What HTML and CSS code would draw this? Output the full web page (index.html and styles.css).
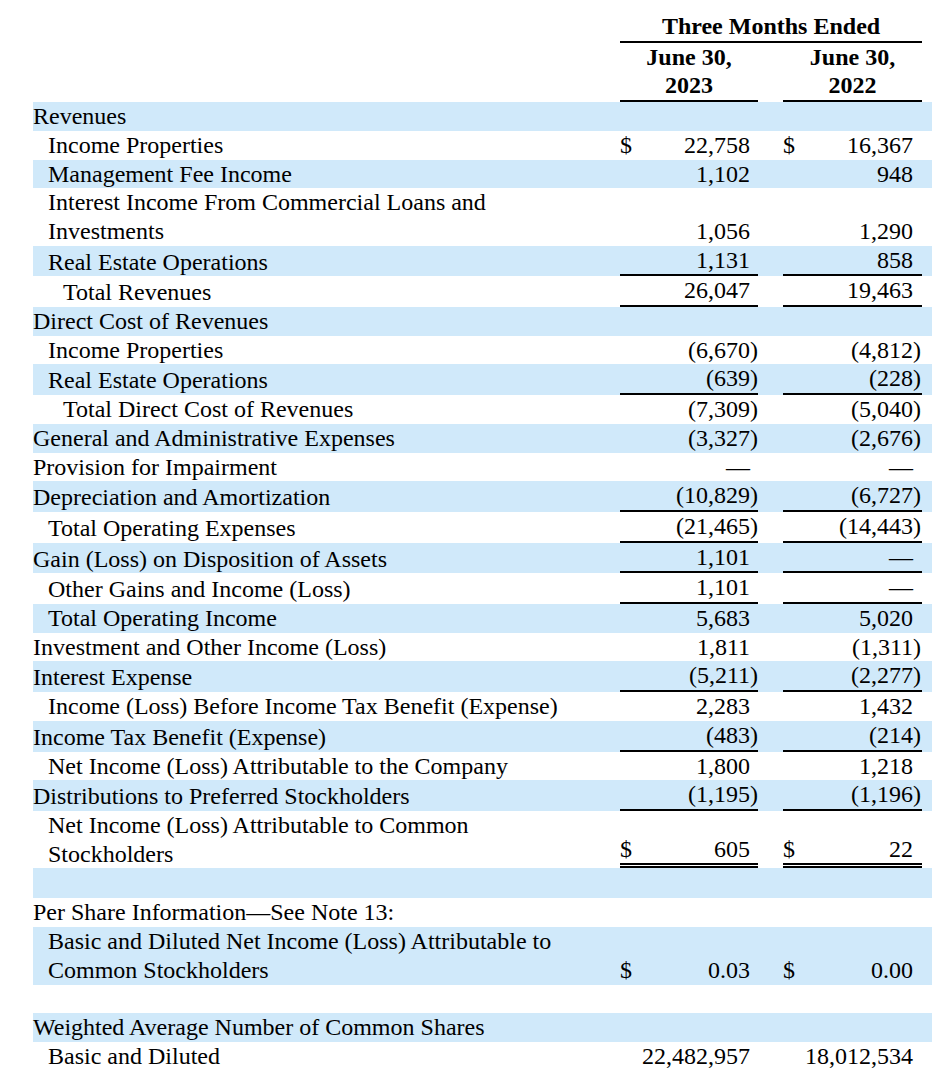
FILE: index.html
```html
<!DOCTYPE html>
<html lang="en">
<head>
<meta charset="utf-8">
<title>Consolidated Statements of Operations</title>
<link rel="stylesheet" href="styles.css">
</head>
<body>
<div class="page">
<table class="fin">
<colgroup>
<col class="c-label"><col class="c-dol"><col class="c-num"><col class="c-par">
<col class="c-gap"><col class="c-dol"><col class="c-num2"><col class="c-par2"><col class="c-trail">
</colgroup>
<thead>
<tr>
<th></th>
<th colspan="7" class="hd ul">Three Months Ended</th>
<th></th>
</tr>
<tr>
<th></th>
<th colspan="3" class="hd ul">June 30,<br>2023</th>
<th></th>
<th colspan="3" class="hd ul">June 30,<br>2022</th>
<th></th>
</tr>
</thead>
<tbody>
<tr class="s"><td class="lbl">Revenues</td><td></td><td></td><td></td><td></td><td></td><td></td><td></td><td></td></tr>
<tr><td class="lbl i1">Income Properties</td><td class="dol">$</td><td class="num">22,758</td><td></td><td></td><td class="dol">$</td><td class="num">16,367</td><td></td><td></td></tr>
<tr class="s"><td class="lbl i1">Management Fee Income</td><td></td><td class="num">1,102</td><td></td><td></td><td></td><td class="num">948</td><td></td><td></td></tr>
<tr><td class="lbl i1">Interest Income From Commercial Loans and<br>Investments</td><td></td><td class="num">1,056</td><td></td><td></td><td></td><td class="num">1,290</td><td></td><td></td></tr>
<tr class="s"><td class="lbl i1">Real Estate Operations</td><td class="ul"></td><td class="num ul">1,131</td><td class="ul"></td><td></td><td class="ul"></td><td class="num ul">858</td><td class="ul"></td><td></td></tr>
<tr><td class="lbl i2">Total Revenues</td><td class="ul"></td><td class="num ul">26,047</td><td class="ul"></td><td></td><td class="ul"></td><td class="num ul">19,463</td><td class="ul"></td><td></td></tr>
<tr class="s"><td class="lbl">Direct Cost of Revenues</td><td></td><td></td><td></td><td></td><td></td><td></td><td></td><td></td></tr>
<tr><td class="lbl i1">Income Properties</td><td></td><td class="num">(6,670</td><td class="par">)</td><td></td><td></td><td class="num">(4,812</td><td class="par">)</td><td></td></tr>
<tr class="s"><td class="lbl i1">Real Estate Operations</td><td class="ul"></td><td class="num ul">(639</td><td class="par ul">)</td><td></td><td class="ul"></td><td class="num ul">(228</td><td class="par ul">)</td><td></td></tr>
<tr><td class="lbl i2">Total Direct Cost of Revenues</td><td></td><td class="num">(7,309</td><td class="par">)</td><td></td><td></td><td class="num">(5,040</td><td class="par">)</td><td></td></tr>
<tr class="s"><td class="lbl">General and Administrative Expenses</td><td></td><td class="num">(3,327</td><td class="par">)</td><td></td><td></td><td class="num">(2,676</td><td class="par">)</td><td></td></tr>
<tr><td class="lbl">Provision for Impairment</td><td></td><td class="num">—</td><td></td><td></td><td></td><td class="num">—</td><td></td><td></td></tr>
<tr class="s"><td class="lbl">Depreciation and Amortization</td><td class="ul"></td><td class="num ul">(10,829</td><td class="par ul">)</td><td></td><td class="ul"></td><td class="num ul">(6,727</td><td class="par ul">)</td><td></td></tr>
<tr><td class="lbl i1">Total Operating Expenses</td><td class="ul"></td><td class="num ul">(21,465</td><td class="par ul">)</td><td></td><td class="ul"></td><td class="num ul">(14,443</td><td class="par ul">)</td><td></td></tr>
<tr class="s"><td class="lbl">Gain (Loss) on Disposition of Assets</td><td class="ul"></td><td class="num ul">1,101</td><td class="ul"></td><td></td><td class="ul"></td><td class="num ul">—</td><td class="ul"></td><td></td></tr>
<tr><td class="lbl i1">Other Gains and Income (Loss)</td><td class="ul"></td><td class="num ul">1,101</td><td class="ul"></td><td></td><td class="ul"></td><td class="num ul">—</td><td class="ul"></td><td></td></tr>
<tr class="s"><td class="lbl i1">Total Operating Income</td><td></td><td class="num">5,683</td><td></td><td></td><td></td><td class="num">5,020</td><td></td><td></td></tr>
<tr><td class="lbl">Investment and Other Income (Loss)</td><td></td><td class="num">1,811</td><td></td><td></td><td></td><td class="num">(1,311</td><td class="par">)</td><td></td></tr>
<tr class="s"><td class="lbl">Interest Expense</td><td class="ul"></td><td class="num ul">(5,211</td><td class="par ul">)</td><td></td><td class="ul"></td><td class="num ul">(2,277</td><td class="par ul">)</td><td></td></tr>
<tr><td class="lbl i1">Income (Loss) Before Income Tax Benefit (Expense)</td><td></td><td class="num">2,283</td><td></td><td></td><td></td><td class="num">1,432</td><td></td><td></td></tr>
<tr class="s"><td class="lbl">Income Tax Benefit (Expense)</td><td class="ul"></td><td class="num ul">(483</td><td class="par ul">)</td><td></td><td class="ul"></td><td class="num ul">(214</td><td class="par ul">)</td><td></td></tr>
<tr><td class="lbl i1">Net Income (Loss) Attributable to the Company</td><td></td><td class="num">1,800</td><td></td><td></td><td></td><td class="num">1,218</td><td></td><td></td></tr>
<tr class="s"><td class="lbl">Distributions to Preferred Stockholders</td><td class="ul"></td><td class="num ul">(1,195</td><td class="par ul">)</td><td></td><td class="ul"></td><td class="num ul">(1,196</td><td class="par ul">)</td><td></td></tr>
<tr><td class="lbl i1">Net Income (Loss) Attributable to Common<br>Stockholders</td><td class="dol dbl">$</td><td class="num dbl">605</td><td class="dbl"></td><td></td><td class="dol dbl">$</td><td class="num dbl">22</td><td class="dbl"></td><td></td></tr>
<tr class="s blank"><td class="lbl">&nbsp;</td><td></td><td></td><td></td><td></td><td></td><td></td><td></td><td></td></tr>
<tr><td class="lbl">Per Share Information—See Note 13:</td><td></td><td></td><td></td><td></td><td></td><td></td><td></td><td></td></tr>
<tr class="s"><td class="lbl i1">Basic and Diluted Net Income (Loss) Attributable to<br>Common Stockholders</td><td class="dol">$</td><td class="num">0.03</td><td></td><td></td><td class="dol">$</td><td class="num">0.00</td><td></td><td></td></tr>
<tr><td class="lbl">&nbsp;</td><td></td><td></td><td></td><td></td><td></td><td></td><td></td><td></td></tr>
<tr class="s"><td class="lbl">Weighted Average Number of Common Shares</td><td></td><td></td><td></td><td></td><td></td><td></td><td></td><td></td></tr>
<tr><td class="lbl i1">Basic and Diluted</td><td></td><td class="num">22,482,957</td><td></td><td></td><td></td><td class="num">18,012,534</td><td></td><td></td></tr>
</tbody>
</table>
</div>
</body>
</html>
```

FILE: styles.css
```css
html, body {
  margin: 0;
  padding: 0;
  background: #ffffff;
}

.page {
  padding: 12px 0 0 33px;
}

.fin {
  width: 899px;
  table-layout: fixed;
  border-collapse: separate;
  border-spacing: 0;
  font-family: "Liberation Serif", "Times New Roman", serif;
  font-size: 24px;
  line-height: 28.7px;
  color: #000;
}

.c-label { width: 587px; }
.c-dol { width: 20px; }
.c-num { width: 110px; }
.c-par { width: 8px; }
.c-gap { width: 25px; }
.c-num2 { width: 110px; }
.c-par2 { width: 9px; }
.c-trail { width: 10px; }

.fin th,
.fin td {
  padding: 0;
  vertical-align: bottom;
  white-space: nowrap;
}

.fin th {
  font-weight: normal;
}

.fin th.hd {
  font-weight: bold;
  text-align: center;
}

.fin tr.s td {
  background: #d0e9fa;
}

.lbl {
  text-align: left;
}

.i1 { padding-left: 15px !important; }
.i2 { padding-left: 30px !important; }

.dol {
  text-align: left;
}

.num {
  text-align: right;
}

.par {
  text-align: left;
}

.ul {
  border-bottom: 2px solid #000;
}

.dbl {
  border-bottom: 5px double #000;
}

.fin tr.blank td {
  height: 30px;
}
```
